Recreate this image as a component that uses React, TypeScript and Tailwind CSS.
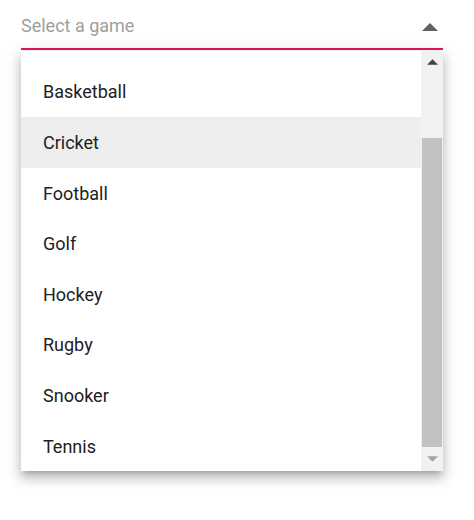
const games = ["Basketball", "Cricket", "Football", "Golf", "Hockey", "Rugby", "Snooker", "Tennis"];

function Caret({ className }: { className: string }) {
  return (
    <svg viewBox="0 0 10 5" className={className} aria-hidden>
      <path d="M0 5 L5 0 L10 5 Z" fill="currentColor" />
    </svg>
  );
}

export default function App() {
  return (
    <div
      className="h-[520px] w-[474px] bg-white"
      style={{ fontFamily: "Roboto, 'Liberation Sans', sans-serif" }}
    >
      <div className="ml-[21px] w-[422px] pt-[8px]">
        <div className="flex h-[42px] items-start border-b-2 border-[#e3165b] pt-[4px]">
          <span className="flex-1 text-[18px] leading-[27px] text-[#9e9e9e]">Select a game</span>
          <Caret className="mr-[5px] mt-[11px] h-[8px] w-[16px] text-[#616161]" />
        </div>
        <div className="mt-[1px] flex h-[420px] overflow-hidden bg-white shadow-[0_8px_10px_1px_rgba(0,0,0,0.14),0_3px_14px_2px_rgba(0,0,0,0.12),0_5px_5px_-3px_rgba(0,0,0,0.2)]">
          <ul className="flex-1 pt-[15.7px]">
            {games.map((g) => (
              <li
                key={g}
                className={`flex h-[50.6px] items-center pl-[22px] text-[18px] text-[#212121] ${
                  g === "Cricket" ? "bg-[#eeeeee]" : ""
                }`}
              >
                {g}
              </li>
            ))}
          </ul>
          <div className="flex w-[22px] flex-col bg-[#f1f1f1]">
            <div className="flex h-[20px] items-center justify-center pt-[1px]">
              <Caret className="h-[6px] w-[11px] text-[#424242]" />
            </div>
            <div className="flex-1 px-[1px]">
              <div className="mt-[67px] h-[309px] bg-[#c1c1c1]" />
            </div>
            <div className="flex h-[22px] items-center justify-center pb-[2px]">
              <Caret className="h-[6px] w-[11px] rotate-180 text-[#a3a3a3]" />
            </div>
          </div>
        </div>
      </div>
    </div>
  );
}
